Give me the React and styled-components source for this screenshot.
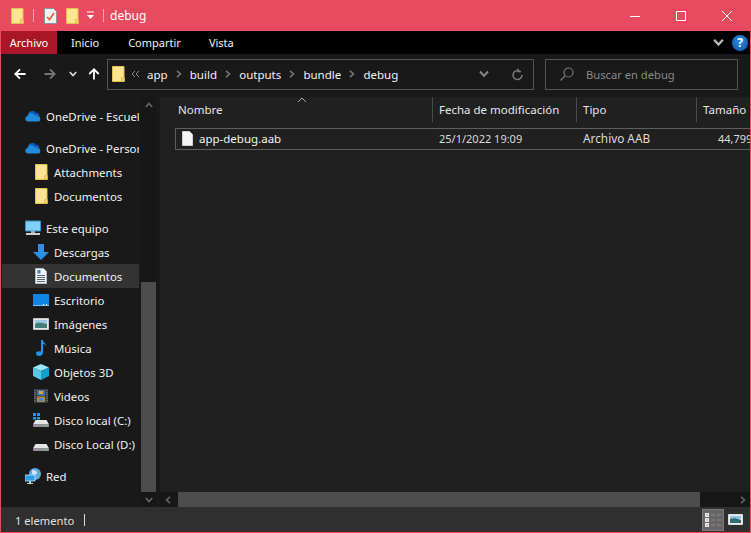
import React from 'react'
import styled, { createGlobalStyle } from 'styled-components'

const GlobalStyle = createGlobalStyle`
    html, body { margin: 0; padding: 0; background: #191919; }
    * { box-sizing: border-box; }
    #root { width: 751px; height: 533px; }
`

const Win = styled.div`
    width: 751px;
    height: 533px;
    display: flex;
    flex-direction: column;
    border: 1px solid #e84a5f;
    border-top: 0;
    background: #191919;
    color: #f2f2f2;
    font-family: "Noto Sans", "Open Sans", sans-serif;
    font-size: 11.5px;
    overflow: hidden;
`

const TitleBar = styled.div`
    height: 31px;
    flex: none;
    background: #e84a5f;
    display: flex;
    align-items: center;
    padding-left: 10px;
`
const QuickSep = styled.span`
    width: 1px;
    height: 13px;
    background: #f5a5ae;
    margin: 0 ${p => p.$right}px 0 ${p => p.$left}px;
`
const TitleText = styled.span`
    color: #fff;
    font-size: 12px;
    flex: 1;
`
const WinButton = styled.div`
    width: 46px;
    height: 31px;
    display: flex;
    align-items: center;
    justify-content: center;
`

const MenuBar = styled.div`
    height: 23px;
    flex: none;
    background: #000;
    display: flex;
    align-items: center;
    font-size: 11px;
`
const FileTab = styled.div`
    width: 56px;
    height: 23px;
    background: #a81628;
    color: #fff;
    display: flex;
    align-items: center;
    justify-content: center;
`
const MenuItem = styled.div`
    margin-left: ${p => p.$gap}px;
    color: #f2f2f2;
`
const MenuRight = styled.div`
    margin-left: auto;
    display: flex;
    align-items: center;
    gap: 8px;
    padding-right: 2px;
`
const HelpBadge = styled.div`
    width: 16px;
    height: 16px;
    border-radius: 50%;
    background: radial-gradient(circle at 50% 35%, #2a8be0, #0b57a8);
    color: #fff;
    font-size: 12px;
    font-weight: 700;
    line-height: 16px;
    text-align: center;
`

const NavBar = styled.div`
    height: 43px;
    flex: none;
    background: #191919;
    display: flex;
    align-items: center;
    padding-bottom: 3px;
`
const NavButtons = styled.div`
    width: 106px;
    flex: none;
    display: flex;
    align-items: center;
    padding-left: 13px;
`
const AddressBox = styled.div`
    width: 427px;
    height: 31px;
    border: 1px solid #555;
    display: flex;
    align-items: center;
    padding-left: 4px;
    font-size: 11.5px;
`
const Crumb = styled.span`
    color: #f2f2f2;
`
const CrumbSep = styled.span`
    display: inline-flex;
    margin: 0 ${p => p.$right ?? 7.1}px 0 ${p => p.$left ?? 7.1}px;
`
const AddressEnd = styled.div`
    margin-left: auto;
    display: flex;
    align-items: center;
    gap: 22px;
    padding-right: 10px;
`
const SearchBox = styled.div`
    width: 193px;
    height: 31px;
    margin-left: 11px;
    border: 1px solid #555;
    display: flex;
    align-items: center;
    padding-left: 14px;
    color: #8a8a8a;
    gap: 12px;
    font-size: 11.2px;
`

const Body = styled.div`
    flex: 1;
    min-height: 0;
    display: flex;
`
const Sidebar = styled.div`
    width: 159px;
    flex: none;
    display: flex;
    background: #191919;
`
const NavList = styled.div`
    width: 138px;
    margin-right: 2px;
    flex: none;
    padding: 7px 0 0 1px;
    overflow: hidden;
`
const NavRow = styled.div`
    height: 24px;
    display: flex;
    align-items: center;
    white-space: nowrap;
    padding-left: ${p => (p.$child ? 31 : 23)}px;
    margin-bottom: ${p => (p.$last ? 8 : 0)}px;
    background: ${p => (p.$active ? '#333' : 'transparent')};
    gap: 5px;
    font-size: 11.4px;
`
const IconSlot = styled.span`
    width: 16px;
    height: 16px;
    flex: none;
    display: inline-flex;
    justify-content: center;
`
const VScroll = styled.div`
    width: 15px;
    flex: none;
    display: flex;
    flex-direction: column;
    align-items: center;
    background: #171717;
`
const ScrollArrow = styled.div`
    height: 15px;
    width: ${p => (p.$wide ? '15px' : 'auto')};
    margin-left: ${p => (p.$end ? 'auto' : '0')};
    flex: none;
    display: flex;
    align-items: center;
    justify-content: center;
`
const VThumb = styled.div`
    width: 15px;
    height: 210px;
    margin-top: auto;
    background: #4d4d4d;
`

const Main = styled.div`
    flex: 1;
    min-width: 0;
    display: flex;
    flex-direction: column;
    background: #202020;
    position: relative;
    overflow: hidden;
`
const Columns = styled.div`
    display: grid;
    grid-template-columns: 258px 144px 120px 90px;
    padding-left: 15px;
    width: 640px;
`
const HeaderCell = styled.div`
    height: 25px;
    display: flex;
    align-items: center;
    padding-left: ${p => (p.$first ? 3 : 6)}px;
    border-right: ${p => (p.$last ? 0 : '1px solid #4a4a4a')};
    color: #e6e6e6;
    font-size: 11.5px;
    white-space: nowrap;
`
const SortMark = styled.span`
    position: absolute;
    top: 0;
    left: 137px;
    display: flex;
`
const FileRow = styled.div`
    margin: 6px 0 0 15px;
    height: 22px;
    border: 1px solid #5e5e5e;
    border-right: 0;
    padding-bottom: 2px;
    display: grid;
    grid-template-columns: 256px 144px 113px 60px;
    align-items: center;
    white-space: nowrap;
    width: 640px;
`
const NameCell = styled.div`
    display: flex;
    align-items: center;
    gap: 6px;
    padding-left: 6px;
`
const DataCell = styled.div`
    padding-left: 7px;
    color: #dcdcdc;
    font-size: ${p => (p.$digits ? 11 : 11.8)}px;
`
const SizeCell = styled.div`
    text-align: left;
    padding-left: 29px;
    color: #dcdcdc;
    font-size: 11px;
`
const HScroll = styled.div`
    margin-top: auto;
    height: 15px;
    flex: none;
    display: flex;
    align-items: center;
    background: #171717;
`
const HThumb = styled.div`
    width: 522px;
    height: 15px;
    background: #4d4d4d;
    margin-left: 3px;
`

const StatusBar = styled.div`
    height: 25px;
    flex: none;
    background: #2f2f2f;
    display: flex;
    align-items: center;
    padding-left: 14px;
    font-size: 11.2px;
    color: #e0e0e0;
`
const StatusLabel = styled.span`
    position: relative;
    top: 1px;
`
const StatusSep = styled.span`
    width: 1px;
    height: 12px;
    background: #e0e0e0;
    margin-left: 10px;
`
const ViewButtons = styled.div`
    margin-left: auto;
    display: flex;
    align-items: center;
    padding-right: 4px;
`
const ViewButton = styled.div`
    width: 22px;
    height: 22px;
    display: flex;
    align-items: center;
    justify-content: center;
    background: ${p => (p.$on ? '#666' : 'transparent')};
    border: 1px solid ${p => (p.$on ? '#7a7a7a' : 'transparent')};
`
const Spacer = styled.span`
    width: ${p => p.$w}px;
    flex: none;
`

// file explorer glyphs, drawn by hand on a 16px box
const Folder = () => (
    <svg width="13" height="16" viewBox="0 0 13 16">
        <path d="M.5.5h11.500v15H.5z" fill="#fde58f" stroke="#e6c04f" />
        <path d="M9.500 11.500h3v4h-3z" fill="#f5d36c" stroke="#dcb548" strokeWidth=".7" />
    </svg>
)
const Chevron = ({ color = '#8a8a8a', dir = 'right', size = 8 }) => (
    <svg width={size} height={size} viewBox="0 0 8 8" fill="none" stroke={color} strokeWidth="1.6"
        style={{ transform: dir === 'down' ? 'rotate(90deg)' : dir === 'up' ? 'rotate(-90deg)' : dir === 'left' ? 'rotate(180deg)' : 'none' }}>
        <path d="M2 .8 5.500 4 2 7.200" />
    </svg>
)
const Arrow = ({ color = '#fff', rotate = 0, mr = 0 }) => (
    <svg width="12" height="12" viewBox="0 0 14 14" fill="none" stroke={color} strokeWidth="2.1"
        style={{ transform: `rotate(${rotate}deg)`, marginRight: mr }}>
        <path d="M13.500 7H1.500M7 1.500 1.500 7 7 12.500" />
    </svg>
)
const Cloud = () => (
    <svg width="16" height="16" viewBox="0 0 16 16">
        <path d="M3.500 8.500a4.200 4.200 0 0 1 7.500-3.700A3.300 3.300 0 0 1 14.500 8L8 10z" fill="#0c58ad" />
        <path d="M2.800 13.500a2.800 2.800 0 0 1-.4-5.500A3.800 3.800 0 0 1 9.500 7a3 3 0 0 1 3 1 2.800 2.800 0 0 1 .8 5.500z" fill="#2089e0" />
    </svg>
)
const Monitor = () => (
    <svg width="16" height="16" viewBox="0 0 16 16">
        <path d="M.5 1h15v10H.5z" fill="#7fd0f7" stroke="#3d8fc9" />
        <path d="M6 11h4v2H6z" fill="#9fb4c2" />
        <path d="M1 13h14v2H1z" fill="#c9d3da" />
    </svg>
)
const DownArrow = () => (
    <svg width="16" height="16" viewBox="0 0 16 16">
        <path d="M5 0h6v8h5l-8 8-8-8h5z" fill="#2f8fe6" />
    </svg>
)
const DocIcon = () => (
    <svg width="12" height="16" viewBox="0 0 12 16">
        <path d="M.5.5h8l3 3v12H.5z" fill="#f4f6f8" stroke="#b5bcc4" />
        <path d="M2 7.500h8M2 9.500h8M2 11.500h8M2 13.500h8" stroke="#54687c" />
        <path d="M2.500 2h3v3.500h-3z" fill="#2e86d8" />
    </svg>
)
const Desktop = () => (
    <svg width="16" height="16" viewBox="0 0 16 16">
        <path d="M0 2h16v11H0z" fill="#0f86e6" />
        <path d="M0 13h16v1H0z" fill="#7cc4f5" />
        <path d="M10 12h1v1h-1zM13 12h1v1h-1z" fill="#fff" />
    </svg>
)
const Photo = () => (
    <svg width="16" height="16" viewBox="0 0 16 16">
        <path d="M.5 2.500h15v11H.5z" fill="#dfe4e8" stroke="#c4c9cd" />
        <path d="M2 4h12v4H2z" fill="#9cc8e6" />
        <path d="M2 8c3-2 6-1 12 0v4H2z" fill="#3f7f78" />
    </svg>
)
const Note = () => (
    <svg width="16" height="16" viewBox="0 0 16 16">
        <path d="M8 0h2c0 3 3 3 3 6-1-1.500-2-2-3-2v8.500C10 15 8 16 6 16s-3-1-3-2.500S5 11 8 11.500z" fill="#1d97ee" />
    </svg>
)
const Cube = () => (
    <svg width="16" height="16" viewBox="0 0 16 16">
        <path d="M8 0l8 3.500L8 7 0 3.500z" fill="#9be6f5" />
        <path d="M0 3.500 8 7v9L0 12z" fill="#55c8e6" />
        <path d="M16 3.500 8 7v9l8-4z" fill="#14a0cc" />
    </svg>
)
const Film = () => (
    <svg width="14" height="16" viewBox="0 0 14 16">
        <path d="M0 1h14v14H0z" fill="#3a3e44" />
        <path d="M3 2h8v5.500H3z" fill="#3f74b5" />
        <path d="M3 8.500h8V14H3z" fill="#b08a3e" />
        <path d="M5 3h4v3H5z" fill="#d9a441" />
        <path d="M5 10h4v3H5z" fill="#3f8fd0" />
        <path d="M1 2v12M13 2v12" stroke="#8a8f96" strokeDasharray="1 1" />
    </svg>
)
const Drive = ({ win }) => (
    <svg width="16" height="16" viewBox="0 0 16 16">
        <path d="M2.500 8h11l2 3.500V15H.5v-3.500z" fill="#e4e6e8" />
        <path d="M.5 12h15v3H.5z" fill="#8f9296" />
        <path d="M12 13h2v1h-2z" fill="#5fe07a" />
        {win && <path d="M0 1h3v3H0zM4 1h3v3H4zM0 5h3v2.500H0zM4 5h3v2.500H4z" fill="#1f9be8" />}
    </svg>
)
const Globe = () => (
    <svg width="16" height="16" viewBox="0 0 16 16">
        <circle cx="10" cy="6" r="6" fill="#5fa8dc" />
        <path d="M7 2c3 0 5 1 5 3s-3 2-5 1z" fill="#cfe6f5" />
        <path d="M0 7h10v6H0z" fill="#2d9be8" stroke="#bfe3f8" strokeWidth=".8" />
        <path d="M4 13h2v2H4zM2 15h6v1H2z" fill="#c2d2dc" />
    </svg>
)
const DocCheck = () => (
    <svg width="13" height="16" viewBox="0 0 13 16">
        <path d="M.5.500h9l3 3v12H.5z" fill="#f0f2f4" stroke="#8d949b" />
        <path d="M3 9l2.500 2.500L10 5" fill="none" stroke="#e8562a" strokeWidth="1.500" />
    </svg>
)
const BlankFile = () => (
    <svg width="11" height="15" viewBox="0 0 11 15">
        <path d="M.5.500h7l3 3v11H.5z" fill="#f4f4f4" stroke="#cfcfcf" />
    </svg>
)
const DetailsGlyph = () => (
    <svg width="16" height="14" viewBox="0 0 16 14">
        <path d="M0 0h4v4H0z" fill="#e8e8e8" /><path d="M1.500 1.500h1v1h-1z" fill="#3f7f78" />
        <path d="M0 5h4v4H0z" fill="#e8e8e8" /><path d="M1.500 6.500h1v1h-1z" fill="#2e86d8" />
        <path d="M0 10h4v4H0z" fill="#e8e8e8" /><path d="M1.500 11.500h1v1h-1z" fill="#d8232a" />
        <path d="M6 2h4M12 2h4M6 7h4M12 7h4M6 12h4M12 12h4" stroke="#8a8a8a" />
    </svg>
)
const TilesGlyph = () => (
    <svg width="15" height="11" viewBox="0 0 15 11">
        <path d="M.5.500h14v10H.5z" fill="#eee" stroke="#ddd" />
        <path d="M2 2h11v3H2z" fill="#8fc4e6" />
        <path d="M2 5c3-1 6-1 11 1v3H2z" fill="#2f6f70" />
    </svg>
)

const navGroups = [
    [{ icon: <Cloud />, label: 'OneDrive - Escuela' }],
    [
        { icon: <Cloud />, label: 'OneDrive - Personal' },
        { icon: <Folder />, label: 'Attachments', child: true },
        { icon: <Folder />, label: 'Documentos', child: true },
    ],
    [
        { icon: <Monitor />, label: 'Este equipo' },
        { icon: <DownArrow />, label: 'Descargas', child: true },
        { icon: <DocIcon />, label: 'Documentos', child: true, active: true },
        { icon: <Desktop />, label: 'Escritorio', child: true },
        { icon: <Photo />, label: 'Imágenes', child: true },
        { icon: <Note />, label: 'Música', child: true },
        { icon: <Cube />, label: 'Objetos 3D', child: true },
        { icon: <Film />, label: 'Videos', child: true },
        { icon: <Drive win />, label: 'Disco local (C:)', child: true },
        { icon: <Drive />, label: 'Disco Local (D:)', child: true },
    ],
    [{ icon: <Globe />, label: 'Red' }],
]

const crumbs = ['app', 'build', 'outputs', 'bundle', 'debug']

export default function App() {
    return (
        <Win>
            <GlobalStyle />
            <TitleBar>
                <Folder />
                <QuickSep $left={9} $right={10} />
                <DocCheck />
                <Spacer $w={9} />
                <Folder />
                <svg width="9" height="9" viewBox="0 0 9 9" style={{ marginLeft: 7 }}>
                    <path d="M1 1h7" stroke="#fff" />
                    <path d="M1 4h7L4.500 8z" fill="#fff" />
                </svg>
                <QuickSep $left={8} $right={6} />
                <TitleText>debug</TitleText>
                <WinButton>
                    <svg width="10" height="10"><path d="M0 5.500h10" stroke="#fff" /></svg>
                </WinButton>
                <WinButton>
                    <svg width="10" height="10"><path d="M.5.500h9v9h-9z" stroke="#fff" fill="none" /></svg>
                </WinButton>
                <WinButton>
                    <svg width="10" height="10"><path d="M0 0l10 10M10 0 0 10" stroke="#fff" /></svg>
                </WinButton>
            </TitleBar>

            <MenuBar>
                <FileTab>Archivo</FileTab>
                <MenuItem $gap={14}>Inicio</MenuItem>
                <MenuItem $gap={29}>Compartir</MenuItem>
                <MenuItem $gap={28}>Vista</MenuItem>
                <MenuRight>
                    <Chevron color="#bbb" dir="down" size={11} />
                    <HelpBadge>?</HelpBadge>
                </MenuRight>
            </MenuBar>

            <NavBar>
                <NavButtons>
                    <Arrow mr={18} />
                    <Arrow color="#777" rotate={180} mr={13} />
                    <Chevron color="#ddd" dir="down" />
                    <Spacer $w={11} />
                    <Arrow rotate={90} />
                </NavButtons>
                <AddressBox>
                    <Folder />
                    <CrumbSep $left={6} $right={7}>
                        <svg width="9" height="8" viewBox="0 0 9 8" fill="none" stroke="#888">
                            <path d="M4 1 1 4l3 3M8 1 5 4l3 3" />
                        </svg>
                    </CrumbSep>
                    {crumbs.map((c, i) => (
                        <React.Fragment key={c}>
                            <Crumb>{c}</Crumb>
                            {i < crumbs.length - 1 && <CrumbSep><Chevron color="#777" /></CrumbSep>}
                        </React.Fragment>
                    ))}
                    <AddressEnd>
                        <Chevron color="#8a8a8a" dir="down" size={10} />
                        <svg width="12" height="13" viewBox="0 0 12 13" fill="none" stroke="#777" strokeWidth="1.500">
                            <path d="M8.500 3A4.500 4.500 0 1 0 11 7M7 .5V3.500H10" />
                        </svg>
                    </AddressEnd>
                </AddressBox>
                <SearchBox>
                    <svg width="14" height="14" viewBox="0 0 14 14" fill="none" stroke="#777" strokeWidth="1.200">
                        <circle cx="8.500" cy="5.500" r="4.500" />
                        <path d="M5 9l-4.500 4.500" />
                    </svg>
                    Buscar en debug
                </SearchBox>
            </NavBar>

            <Body>
                <Sidebar>
                    <NavList>
                        {navGroups.map((group, g) =>
                            group.map((item, i) => (
                                <NavRow key={g + '-' + i} $child={item.child} $active={item.active} $last={i === group.length - 1}>
                                    <IconSlot>{item.icon}</IconSlot>
                                    {item.label}
                                </NavRow>
                            ))
                        )}
                    </NavList>
                    <VScroll>
                        <ScrollArrow><Chevron color="#666" dir="up" /></ScrollArrow>
                        <VThumb />
                        <ScrollArrow><Chevron color="#666" dir="down" /></ScrollArrow>
                    </VScroll>
                </Sidebar>

                <Main>
                    <SortMark>
                        <svg width="10" height="6" viewBox="0 0 10 6" fill="none" stroke="#aaa"><path d="M1 5l4-4 4 4" /></svg>
                    </SortMark>
                    <Columns>
                        <HeaderCell $first>Nombre</HeaderCell>
                        <HeaderCell>Fecha de modificación</HeaderCell>
                        <HeaderCell>Tipo</HeaderCell>
                        <HeaderCell $last>Tamaño</HeaderCell>
                    </Columns>
                    <FileRow>
                        <NameCell><BlankFile />app-debug.aab</NameCell>
                        <DataCell $digits>25/1/2022 19:09</DataCell>
                        <DataCell>Archivo AAB</DataCell>
                        <SizeCell>44,799 KB</SizeCell>
                    </FileRow>
                    <HScroll>
                        <ScrollArrow $wide><Chevron color="#666" dir="left" /></ScrollArrow>
                        <HThumb />
                        <ScrollArrow $wide $end><Chevron color="#666" /></ScrollArrow>
                    </HScroll>
                </Main>
            </Body>

            <StatusBar>
                <StatusLabel>1 elemento</StatusLabel>
                <StatusSep />
                <ViewButtons>
                    <ViewButton $on><DetailsGlyph /></ViewButton>
                    <ViewButton><TilesGlyph /></ViewButton>
                </ViewButtons>
            </StatusBar>
        </Win>
    )
}
